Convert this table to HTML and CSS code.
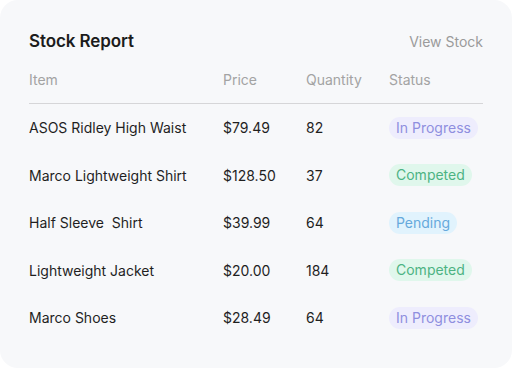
FILE: index.html
```html
<!DOCTYPE html>
<html>
<head>
<meta charset="utf-8">
<link rel="stylesheet" href="styles.css">
</head>
<body>
<div class="card">
  <div class="card-head">
    <h2 class="title">Stock Report</h2>
    <a class="view">View Stock</a>
  </div>
  <div class="row head">
    <div>Item</div><div>Price</div><div>Quantity</div><div>Status</div>
  </div>
  <div class="row">
    <div>ASOS Ridley High Waist</div><div>$79.49</div><div>82</div><div><span class="pill prog">In Progress</span></div>
  </div>
  <div class="row">
    <div>Marco Lightweight Shirt</div><div>$128.50</div><div>37</div><div><span class="pill done">Competed</span></div>
  </div>
  <div class="row">
    <div>Half Sleeve&nbsp; Shirt</div><div>$39.99</div><div>64</div><div><span class="pill pend">Pending</span></div>
  </div>
  <div class="row">
    <div>Lightweight Jacket</div><div>$20.00</div><div>184</div><div><span class="pill done">Competed</span></div>
  </div>
  <div class="row">
    <div>Marco Shoes</div><div>$28.49</div><div>64</div><div><span class="pill prog">In Progress</span></div>
  </div>
</div>
</body>
</html>
```
FILE: styles.css
```css
html, body { margin: 0; padding: 0; background: #ffffff; }
body { font-family: Inter, "Noto Sans", sans-serif; }
.card {
  width: 512px;
  height: 368px;
  box-sizing: border-box;
  background: #f7f8fa;
  border-radius: 18px;
  padding: 30px 29px 0 29px;
}
.card-head {
  display: flex;
  justify-content: space-between;
  align-items: center;
  height: 22px;
}
.title {
  margin: 0;
  font-size: 17px;
  font-weight: 600;
  color: #1c1c1c;
  letter-spacing: -0.1px;
}
.view {
  font-size: 14px;
  color: #9b9b9b;
}
.row {
  display: grid;
  grid-template-columns: 194px 83px 83px 1fr;
  align-items: center;
  height: 47.5px;
  font-size: 14px;
  color: #1f1f1f;
  white-space: nowrap;
}
.row.head {
  height: auto;
  line-height: 20px;
  margin-top: 18px;
  padding-bottom: 13px;
  color: #a3a3a3;
  border-bottom: 1px solid #d6d6d8;
}
.pill {
  display: inline-block;
  height: 22px;
  line-height: 22px;
  padding: 0 7px;
  border-radius: 11px;
}
.prog { background: #eeedfd; color: #8f8fdf; }
.done { background: #e0f7ec; color: #4db383; }
.pend { background: #e1f3fd; color: #66a9dc; }
```
